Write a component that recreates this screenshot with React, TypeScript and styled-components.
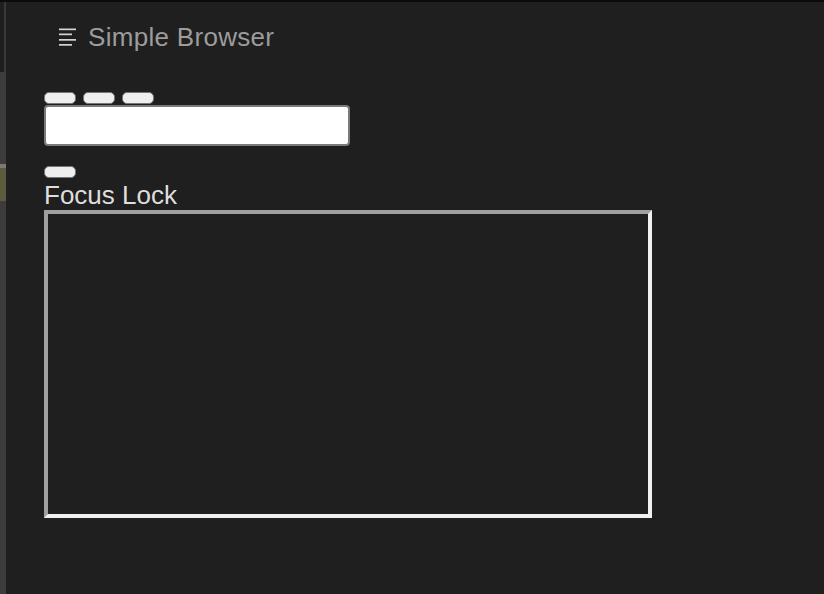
import React from "react";
import styled, { createGlobalStyle } from "styled-components";

const GlobalStyle = createGlobalStyle`
  html, body {
    margin: 0;
    padding: 0;
    background: #1f1f1f;
  }
  body {
    font-family: "Liberation Sans", Arial, sans-serif;
  }
`;

const Frame = styled.div`
  display: flex;
  height: 100vh;
  border-top: 2px solid #0b0b0b;
  box-sizing: border-box;
  overflow: hidden;
`;

const Rail = styled.div`
  width: 6px;
  flex-shrink: 0;
  display: flex;
  flex-direction: column;
  background: #3c3c3c;
`;

const RailTop = styled.div`
  height: 70px;
  background: #1f1f1f;
  border-right: 2px solid #393939;
  box-sizing: border-box;
`;

const RailMarker = styled.div`
  margin-top: 92px;
  height: 33px;
  background: #5c5b3c;
  border-top: 4px solid #7a7a7a;
`;

const Main = styled.main`
  flex: 1;
  background: #1f1f1f;
  padding: 20px 0 0 38px;
  display: flex;
  flex-direction: column;
  align-items: flex-start;
`;

const Header = styled.header`
  display: flex;
  align-items: center;
  gap: 12px;
  margin-left: 15px;
`;

const Title = styled.h1`
  margin: 0;
  font-size: 26px;
  line-height: 30px;
  font-weight: 400;
  letter-spacing: 0.3px;
  color: #9c9c9c;
`;

const Controls = styled.div`
  margin-top: 40px;
  display: flex;
  gap: 7px;
`;

const Pill = styled.button`
  width: 32px;
  height: 12px;
  padding: 0;
  border: 1px solid #767676;
  border-radius: 5px;
  background: #efefef;
`;

const Address = styled.input`
  width: 306px;
  height: 41px;
  margin-top: 1px;
  box-sizing: border-box;
  border: 2px solid #7a7a7a;
  border-radius: 4px;
  background: #ffffff;
  outline: none;
`;

const LockToggle = styled(Pill)`
  margin-top: 20px;
`;

const Label = styled.div`
  padding-top: 2px;
  font-size: 26px;
  line-height: 30px;
  color: #dedede;
`;

const Viewport = styled.div`
  width: 600px;
  height: 300px;
  border: 4px solid;
  border-color: #a0a0a0 #f0f0f0 #f0f0f0 #a0a0a0;
  background: #1f1f1f;
`;

const MenuIcon = () => (
  <svg width="17" height="18" viewBox="0 0 17 18" fill="#d4d4d4">
    <rect x="0" y="0.5" width="17" height="1.7" />
    <rect x="0" y="5.5" width="13" height="1.7" />
    <rect x="0" y="11" width="17" height="1.7" />
    <rect x="0" y="16" width="13" height="1.7" />
  </svg>
);

export default function App() {
  return (
    <>
      <GlobalStyle />
      <Frame>
        <Rail>
          <RailTop />
          <RailMarker />
        </Rail>
        <Main>
          <Header>
            <MenuIcon />
            <Title>Simple Browser</Title>
          </Header>
          <Controls>
            <Pill />
            <Pill />
            <Pill />
          </Controls>
          <Address />
          <LockToggle />
          <Label>Focus Lock</Label>
          <Viewport />
        </Main>
      </Frame>
    </>
  );
}
